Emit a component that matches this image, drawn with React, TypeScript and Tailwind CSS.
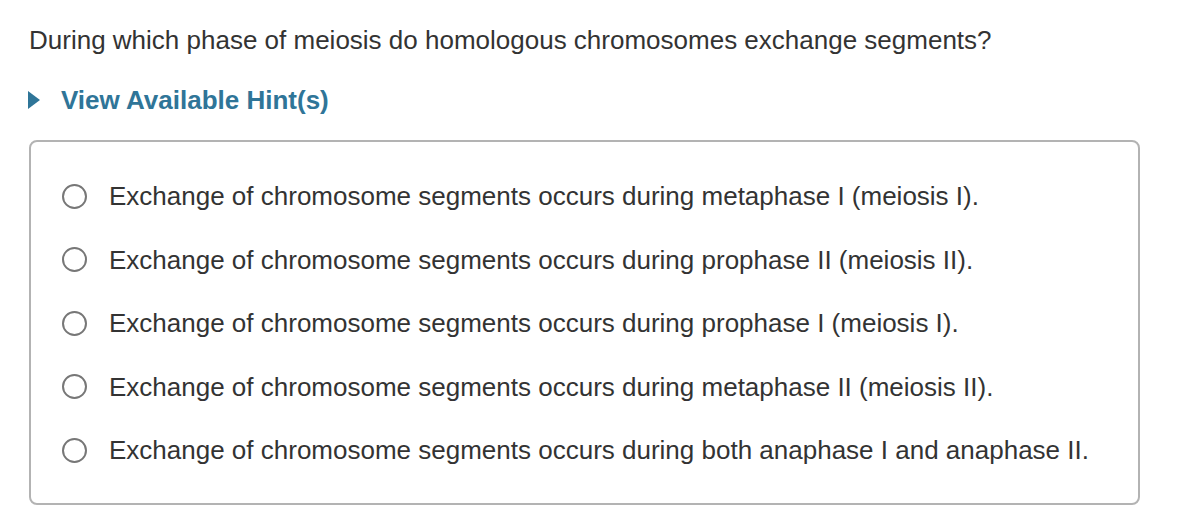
const options = [
  "Exchange of chromosome segments occurs during metaphase I (meiosis I).",
  "Exchange of chromosome segments occurs during prophase II (meiosis II).",
  "Exchange of chromosome segments occurs during prophase I (meiosis I).",
  "Exchange of chromosome segments occurs during metaphase II (meiosis II).",
  "Exchange of chromosome segments occurs during both anaphase I and anaphase II.",
];

export default function App() {
  return (
    <div
      className="w-[1184px] h-[514px] bg-white text-[#333] pl-[29px] pr-[44px] pt-[24px]"
      style={{ fontFamily: '"Liberation Sans", Arial, sans-serif' }}
    >
      <p className="text-[26px] leading-[32px]">
        During which phase of meiosis do homologous chromosomes exchange segments?
      </p>

      <div className="flex items-center mt-[28px] -ml-[1px] h-[32px]">
        <svg width="12" height="18" viewBox="0 0 12 18" className="mr-[21px]">
          <path d="M0 0 L12 9 L0 18 Z" fill="#2f7598" />
        </svg>
        <span className="text-[26px] font-bold text-[#2f7598]">View Available Hint(s)</span>
      </div>

      <div className="mt-[24px] h-[365px] border-2 border-[#b3b3b3] rounded-[8px] pt-[38px] pl-[31px] flex flex-col gap-[31.5px]">
        {options.map((o) => (
          <label key={o} className="flex items-center h-[32px]">
            <span className="w-[25px] h-[25px] rounded-full border-2 border-[#777] bg-white mr-[22px] shrink-0" />
            <span className="text-[26px] leading-[32px]">{o}</span>
          </label>
        ))}
      </div>
    </div>
  );
}
